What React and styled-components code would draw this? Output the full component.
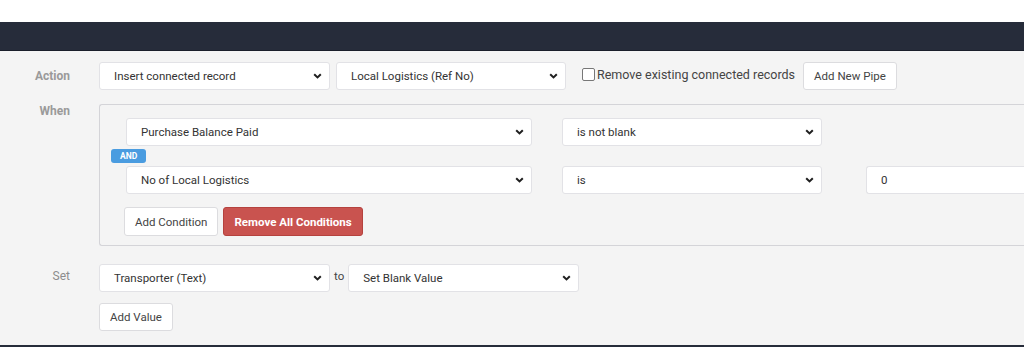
import React from 'react'
import styled, { createGlobalStyle } from 'styled-components'

const Global = createGlobalStyle`
  html, body {
    margin: 0;
    padding: 0;
    overflow: hidden;
    background: #fff;
  }
  body {
    font-family: Roboto, "Liberation Sans", Arial, sans-serif;
    font-size: 11.5px;
    color: #333;
  }
`

const TopStrip = styled.div`
  height: 22px;
  background: #fff;
`

const NavBar = styled.div`
  height: 28px;
  background: #262c3a;
  border-bottom: 1px solid #1a1f2b;
`

const Page = styled.div`
  background: #f4f4f4;
  height: 296px;
  padding-top: 11px;
  box-sizing: border-box;
  border-bottom: 2px solid #262c3a;
`

const FormRow = styled.div`
  display: grid;
  grid-template-columns: 70px 1fr;
  column-gap: 29px;
  margin-bottom: ${p => p.$gap || 0}px;
`

const Label = styled.div`
  text-align: right;
  color: ${p => (p.$light ? '#8c8c8c' : '#9a9a9a')};
  font-weight: ${p => (p.$light ? 400 : 700)};
  font-size: 12px;
  padding-top: ${p => p.$top || 7}px;
  line-height: 14px;
`

const Line = styled.div`
  display: flex;
  align-items: center;
  gap: ${p => p.$gap || 6}px;
  margin-bottom: ${p => p.$bottom || 0}px;
`

const Box = styled.div`
  width: ${p => (p.$w ? `${p.$w}px` : 'auto')};
  flex: ${p => (p.$w ? '0 0 auto' : '1 1 auto')};
  height: 28px;
  box-sizing: border-box;
  background: #fff;
  border: 1px solid #e2e2e6;
  border-right: ${p => (p.$open ? 'none' : '1px solid #e2e2e6')};
  border-radius: ${p => (p.$open ? '3px 0 0 3px' : '3px')};
  display: flex;
  align-items: center;
  justify-content: space-between;
  padding: 0 7px 0 14px;
  color: #333;
`

const Chevron = () => (
  <svg width="9" height="6" viewBox="0 0 9 6">
    <path d="M1.2 1.2l3.3 3.2 3.3-3.2" fill="none" stroke="#1f1f1f" strokeWidth="2" />
  </svg>
)

const Select = ({ w, children }) => (
  <Box $w={w}>
    <span>{children}</span>
    <Chevron />
  </Box>
)

const CheckLabel = styled.label`
  display: flex;
  align-items: center;
  gap: 2px;
  color: #444;
  margin-left: 10px;
  margin-top: -3px;
  font-size: 12.5px;
`

const CheckBox = styled.span`
  width: 11px;
  height: 11px;
  border: 1px solid #777;
  border-radius: 2px;
  background: #fff;
  display: inline-block;
`

const Button = styled.button`
  height: ${p => p.$h || 28}px;
  padding: 0 ${p => p.$pad || 10}px;
  font-family: inherit;
  font-size: 11.5px;
  border-radius: 3px;
  border: 1px solid ${p => (p.$danger ? '#b5423e' : '#dcdcdf')};
  background: ${p => (p.$danger ? '#c9534f' : '#fff')};
  color: ${p => (p.$danger ? '#fff' : '#444')};
  font-weight: ${p => (p.$danger ? 700 : 400)};
  cursor: pointer;
`

const Panel = styled.div`
  height: 142px;
  box-sizing: border-box;
  border: 1px solid #d4d4d8;
  border-right: none;
  border-radius: 3px 0 0 3px;
  padding: 13px 0 0 26px;
  margin-top: 3px;
  min-width: 0;
`

const CondRow = styled.div`
  display: flex;
  align-items: center;
`

const Spacer = styled.span`
  flex: 0 0 ${p => p.$w}px;
`

const Badge = styled.span`
  display: inline-block;
  height: 14px;
  line-height: 14px;
  padding: 0 9px;
  margin: 3px 0 3px -15px;
  background: #4a9ce0;
  color: #fff;
  font-size: 8.5px;
  font-weight: 700;
  border-radius: 3px;
`

const ToText = styled.span`
  color: #444;
  margin-top: -4px;
`

const Buttons = styled.div`
  display: flex;
  gap: 5px;
  margin: 13px 0 0 -2px;
`

export default function App() {
  return (
    <>
      <Global />
      <TopStrip />
      <NavBar />
      <Page>
        <FormRow $gap={11}>
          <Label>Action</Label>
          <Line $gap={6}>
            <Select w={231}>Insert connected record</Select>
            <Select w={230}>Local Logistics (Ref No)</Select>
            <CheckLabel>
              <CheckBox />
              Remove existing connected records
            </CheckLabel>
            <Button style={{ marginLeft: 2 }}>Add New Pipe</Button>
          </Line>
        </FormRow>
        <FormRow $gap={18}>
          <Label $top={3}>When</Label>
          <Panel>
            <CondRow>
              <Select w={406}>Purchase Balance Paid</Select>
              <Spacer $w={30} />
              <Select w={260}>is not blank</Select>
            </CondRow>
            <Badge>AND</Badge>
            <CondRow>
              <Select w={406}>No of Local Logistics</Select>
              <Spacer $w={30} />
              <Select w={260}>is</Select>
              <Spacer $w={44} />
              <Box $open>0</Box>
            </CondRow>
            <Buttons>
              <Button $h={29}>Add Condition</Button>
              <Button $h={29} $danger>Remove All Conditions</Button>
            </Buttons>
          </Panel>
        </FormRow>
        <FormRow $gap={0}>
          <Label $light $top={5}>Set</Label>
          <div>
            <Line $gap={4} $bottom={11}>
              <Select w={231}>Transporter (Text)</Select>
              <ToText>to</ToText>
              <Select w={231}>Set Blank Value</Select>
            </Line>
            <Button>Add Value</Button>
          </div>
        </FormRow>
      </Page>
    </>
  )
}
